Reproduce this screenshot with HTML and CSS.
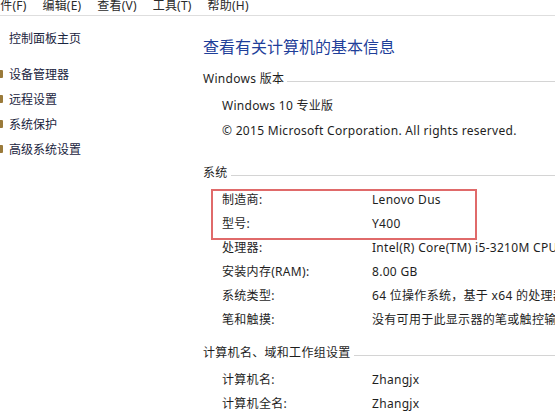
FILE: index.html
```html
<!DOCTYPE html>
<html lang="zh-CN">
<head>
	<meta charset="UTF-8">
	<meta name="viewport" content="width=device-width, initial-scale=1.0">
	<title>系统</title>
	<link rel="stylesheet" href="styles.css">
</head>
<body>
	<div class="menubar">
		<span class="menu first">文件(F)</span>
		<span class="menu">编辑(E)</span>
		<span class="menu">查看(V)</span>
		<span class="menu">工具(T)</span>
		<span class="menu">帮助(H)</span>
	</div>
	<div class="main">
		<div class="sidebar">
			<div class="home">控制面板主页</div>
			<ul class="tasks">
				<li>设备管理器</li>
				<li>远程设置</li>
				<li>系统保护</li>
				<li>高级系统设置</li>
			</ul>
		</div>
		<div class="content">
			<h1 class="page-title">查看有关计算机的基本信息</h1>

			<div class="section">
				<div class="section-head"><span>Windows 版本</span></div>
				<div class="edition">
					<div class="edition-row">Windows 10 专业版</div>
					<div class="edition-row">© 2015 Microsoft Corporation. All rights reserved.</div>
				</div>
			</div>

			<div class="section sys">
				<div class="section-head"><span>系统</span></div>
				<div class="rows">
					<div class="highlight">
						<div class="row"><span class="label">制造商:</span><span class="value">Lenovo Dus</span></div>
						<div class="row"><span class="label">型号:</span><span class="value">Y400</span></div>
					</div>
					<div class="row"><span class="label">处理器:</span><span class="value">Intel(R) Core(TM) i5-3210M CPU @ 2.50GHz</span></div>
					<div class="row"><span class="label">安装内存(RAM):</span><span class="value">8.00 GB</span></div>
					<div class="row"><span class="label">系统类型:</span><span class="value">64 位操作系统，基于 x64 的处理器</span></div>
					<div class="row"><span class="label">笔和触摸:</span><span class="value">没有可用于此显示器的笔或触控输入</span></div>
				</div>
			</div>

			<div class="section comp">
				<div class="section-head"><span>计算机名、域和工作组设置</span></div>
				<div class="rows">
					<div class="row"><span class="label">计算机名:</span><span class="value">Zhangjx</span></div>
					<div class="row"><span class="label">计算机全名:</span><span class="value">Zhangjx</span></div>
				</div>
			</div>
		</div>
	</div>
</body>
</html>
```

FILE: styles.css
```css
html, body {
	margin: 0;
	padding: 0;
	background: #fff;
	overflow: hidden;
}
body {
	font-family: "Noto Sans", "Noto Sans CJK SC", sans-serif;
	font-size: 12px;
	color: #1e1e1e;
	width: 555px;
	height: 411px;
}
.menubar {
	height: 15px;
	line-height: 11px;
	border-bottom: 1px solid #dedede;
	display: flex;
	gap: 16px;
	margin-left: -12px;
	white-space: nowrap;
	color: #2a2a2a;
	letter-spacing: 0.2px;
}
.main {
	display: flex;
}
.sidebar {
	width: 194px;
	padding-left: 9px;
	padding-top: 13px;
	flex: none;
}
.home {
	line-height: 20px;
	color: #1a2440;
}
.tasks {
	list-style: none;
	margin: 13px 0 0 0;
	padding: 0;
}
.tasks li {
	line-height: 25px;
	color: #1a2440;
	position: relative;
}
.tasks li::before {
	content: "";
	position: absolute;
	left: -9px;
	top: 8px;
	width: 3px;
	height: 8px;
	background: #9a7a3a;
	border-radius: 0 1px 1px 0;
}
.content {
	flex: 1;
	padding-top: 20px;
	white-space: nowrap;
	min-width: 0;
	letter-spacing: 0.3px;
}
.page-title {
	margin: 0;
	font-size: 16px;
	font-weight: normal;
	line-height: 22px;
	color: #1f3f9a;
	letter-spacing: 0;
}
.section-head {
	display: flex;
	align-items: center;
	line-height: 20px;
}
.section-head::after {
	content: "";
	flex: 1;
	height: 1px;
	background: #d4d4d4;
	margin-left: 3px;
	margin-top: 4px;
}
.section {
	margin-top: 11px;
}
.edition {
	margin-top: 4px;
	padding-left: 19px;
}
.edition-row {
	line-height: 25px;
}
.section.sys {
	margin-top: 20px;
}
.section.comp {
	margin-top: 11px;
}
.rows {
	margin-top: 5px;
	padding-left: 19px;
}
.row {
	display: flex;
	line-height: 24px;
}
.label {
	width: 150px;
	flex: none;
}
.highlight {
	position: relative;
}
.highlight::after {
	content: "";
	position: absolute;
	left: -11px;
	top: 1px;
	width: 262px;
	height: 47px;
	border: 2px solid #e06a6a;
}
```
